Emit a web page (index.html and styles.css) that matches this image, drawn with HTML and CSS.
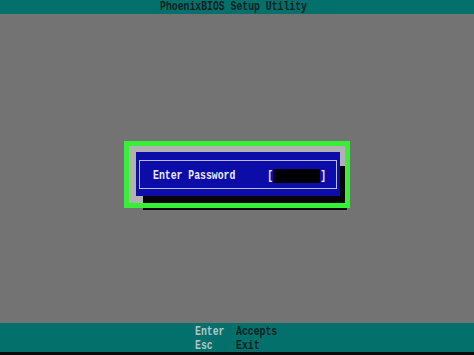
FILE: index.html
```html
<!DOCTYPE html>
<html lang="en">
<head>
    <meta charset="UTF-8">
    <meta name="viewport" content="width=device-width, initial-scale=1.0">
    <title>PhoenixBIOS Setup Utility</title>
    <link rel="stylesheet" href="styles.css">
</head>
<body>
    <div class="screen">
        <!-- 标题栏 -->
        <div class="title-bar">
            <span class="bios-text">PhoenixBIOS Setup Utility</span>
        </div>

        <!-- 密码对话框 -->
        <div class="work-area">
            <div class="dialog-frame">
                <div class="dialog">
                    <div class="dialog-inner">
                        <span class="label bios-text">Enter Password</span>
                        <span class="field">
                            <span class="bracket bios-text">[</span>
                            <span class="input"></span>
                            <span class="bracket bios-text">]</span>
                        </span>
                    </div>
                </div>
            </div>
        </div>

        <!-- 帮助栏 -->
        <div class="help-bar">
            <div class="help-row">
                <span class="key bios-text">Enter</span>
                <span class="desc bios-text">Accepts</span>
            </div>
            <div class="help-row">
                <span class="key bios-text">Esc</span>
                <span class="desc bios-text">Exit</span>
            </div>
        </div>
        <div class="bottom-edge"></div>
    </div>
</body>
</html>
```

FILE: styles.css
```css
/* 重置默认样式 */
* {
    margin: 0;
    padding: 0;
    box-sizing: border-box;
}

body {
    font-family: "Liberation Mono", "DejaVu Sans Mono", monospace;
    font-size: 9.8px;
    font-weight: bold;
    background-color: #737373;
    overflow: hidden;
}

.screen {
    width: 474px;
    height: 355px;
    display: flex;
    flex-direction: column;
}

/* 文本模式字体：拉高字形 */
.bios-text {
    display: inline-block;
    line-height: 10px;
    transform: scaleY(1.35);
    white-space: pre;
}

/* 标题栏 */
.title-bar {
    height: 14px;
    background-color: #03706c;
    color: #0c1e1e;
    display: flex;
    align-items: center;
    padding-left: 160px;
}

/* 中间区域 */
.work-area {
    flex: 1;
    display: flex;
    justify-content: center;
    align-items: center;
    padding-top: 12px;
}

.dialog-frame {
    position: relative;
    background-color: #b1b1b1;
    padding: 11px 10px 12px 12px;
}

/* 绿色高亮框 */
.dialog-frame::after {
    content: "";
    position: absolute;
    inset: 0;
    border: 5px solid #36ef36;
}

.dialog {
    width: 204px;
    height: 44px;
    background-color: #0c0ca8;
    box-shadow: 7px 14px 0 #050505;
    padding: 8px 3px 7px 3px;
}

.dialog-inner {
    height: 100%;
    border: 1px solid #bcbce6;
    display: flex;
    align-items: center;
    padding: 2px 0 0 13px;
    color: #ececf4;
}

.field {
    display: flex;
    align-items: center;
    margin-left: 32px;
}

.bracket {
    width: 6px;
}

.input {
    width: 47px;
    height: 14px;
    background-color: #000;
}

/* 帮助栏 */
.help-bar {
    height: 29px;
    background-color: #03706c;
    padding: 2px 0 0 195px;
}

.help-row {
    display: flex;
    align-items: center;
    height: 14px;
}

.key {
    width: 41px;
    color: #b2c6c6;
}

.desc {
    color: #0a2020;
}

.bottom-edge {
    height: 3px;
    background-color: #0a0a0a;
}
```
